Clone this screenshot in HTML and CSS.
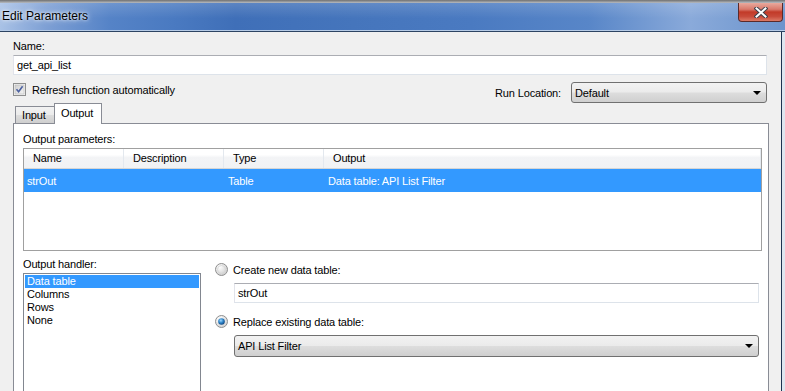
FILE: index.html
```html
<!DOCTYPE html>
<html>
<head>
<meta charset="utf-8">
<link rel="stylesheet" href="styles.css">
</head>
<body>
<div class="window">
  <div class="topstrip"></div>
  <div class="titlebar">
    <div class="title">Edit Parameters</div>
    <div class="close">
      <svg width="14" height="11" viewBox="0 0 14 11">
        <path d="M2.5 1.5 L11.5 9.5 M11.5 1.5 L2.5 9.5" stroke="#3a3f4a" stroke-width="4" stroke-linecap="square"/>
        <path d="M2.5 1.5 L11.5 9.5 M11.5 1.5 L2.5 9.5" stroke="#ffffff" stroke-width="2" stroke-linecap="square"/>
      </svg>
    </div>
  </div>
  <div class="main">
    <div class="client">
      <div class="top">
        <div class="label">Name:</div>
        <div class="textbox name-box">get_api_list</div>
        <div class="optrow">
          <div class="check">
            <svg class="checkbox" width="13" height="13" viewBox="0 0 13 13">
              <defs>
                <linearGradient id="cb" x1="0" y1="0" x2="1" y2="1">
                  <stop offset="0" stop-color="#cfcfcf"/>
                  <stop offset="1" stop-color="#f4f4f4"/>
                </linearGradient>
              </defs>
              <rect x="0.5" y="0.5" width="12" height="12" fill="#f4f4f4" stroke="#8e8f8f"/>
              <rect x="2" y="2" width="9" height="9" fill="url(#cb)" stroke="#b8b8b8" stroke-width="0.6"/>
              <path d="M3.5 6.3 L5.6 8.8 L9.6 3.2" fill="none" stroke="#4c61a0" stroke-width="1.6"/>
            </svg>
            <span>Refresh function automatically</span>
          </div>
          <div class="runloc">
            <span class="runlabel">Run Location:</span>
            <div class="combo run-combo"><span>Default</span><i class="arrow"></i></div>
          </div>
        </div>
      </div>
      <div class="tabs">
        <div class="tab">Input</div>
        <div class="tab active">Output</div>
      </div>
      <div class="panel">
        <div class="label">Output parameters:</div>
        <div class="listview">
          <div class="lv-header">
            <div class="hcol c1">Name</div>
            <div class="hcol c2">Description</div>
            <div class="hcol c3">Type</div>
            <div class="hcol c4">Output</div>
          </div>
          <div class="lv-row selected">
            <div class="rcol c1">strOut</div>
            <div class="rcol c2"></div>
            <div class="rcol c3">Table</div>
            <div class="rcol c4">Data table: API List Filter</div>
          </div>
        </div>
        <div class="handler">
          <div class="hleft">
            <div class="label">Output handler:</div>
            <div class="listbox">
              <div class="item selected">Data table</div>
              <div class="item">Columns</div>
              <div class="item">Rows</div>
              <div class="item">None</div>
            </div>
          </div>
          <div class="hright">
            <div class="radio-row first">
              <svg width="13" height="13" viewBox="0 0 13 13">
                <defs>
                  <radialGradient id="r1" cx="0.35" cy="0.3" r="0.8">
                    <stop offset="0" stop-color="#ffffff"/>
                    <stop offset="1" stop-color="#c9c9c9"/>
                  </radialGradient>
                </defs>
                <circle cx="6.5" cy="6.5" r="6" fill="url(#r1)" stroke="#8f8f8f"/>
                <circle cx="6.5" cy="6.5" r="4" fill="none" stroke="#d4d4d4" stroke-width="0.8"/>
              </svg>
              <span>Create new data table:</span>
            </div>
            <div class="textbox data-box">strOut</div>
            <div class="radio-row second">
              <svg width="13" height="13" viewBox="0 0 13 13">
                <defs>
                  <radialGradient id="r2" cx="0.35" cy="0.3" r="0.8">
                    <stop offset="0" stop-color="#ffffff"/>
                    <stop offset="1" stop-color="#cfcfcf"/>
                  </radialGradient>
                  <radialGradient id="r2d" cx="0.4" cy="0.35" r="0.7">
                    <stop offset="0" stop-color="#9fd8ff"/>
                    <stop offset="0.5" stop-color="#2d84c8"/>
                    <stop offset="1" stop-color="#0e3f78"/>
                  </radialGradient>
                </defs>
                <circle cx="6.5" cy="6.5" r="6" fill="url(#r2)" stroke="#8f8f8f"/>
                <circle cx="6.5" cy="6.5" r="3.3" fill="url(#r2d)"/>
              </svg>
              <span>Replace existing data table:</span>
            </div>
            <div class="combo data-combo"><span>API List Filter</span><i class="arrow"></i></div>
          </div>
        </div>
      </div>
    </div>
    <div class="frame"></div>
  </div>
</div>
</body>
</html>
```
FILE: styles.css
```css
* { box-sizing: border-box; }
html, body { margin: 0; padding: 0; }
body {
  font-family: "Liberation Sans", Arial, sans-serif;
  font-size: 11px;
  letter-spacing: -0.15px;
  color: #000;
  background: #f0f0f0;
}
.window {
  width: 785px;
  height: 391px;
  overflow: hidden;
  display: flex;
  flex-direction: column;
}
.topstrip {
  height: 3px;
  background: linear-gradient(180deg, #6f7070, #b8bcc2);
  flex: none;
}
.titlebar {
  height: 29px;
  flex: none;
  display: flex;
  justify-content: space-between;
  align-items: flex-start;
  background:
    linear-gradient(180deg, rgba(255,255,255,0.15) 0%, rgba(255,255,255,0) 55%),
    linear-gradient(90deg, #a9c2e6 0%, #7d9fd4 6%, #5583c7 14%, #4a7ac1 22%, #3f6fb8 30%, #4575bc 45%, #4a7ac1 60%, #5886c8 75%, #8aaada 88%, #789dd2 95%, #6d94cd 100%);
  border-bottom: 1px solid #2d4463;
  box-shadow: inset 0 -1px 0 #b6cbe6;
}
.title {
  font-family: "Liberation Sans", Arial, sans-serif;
  font-size: 12px;
  letter-spacing: 0;
  line-height: 27px;
  padding-left: 2px;
  color: #000;
  text-shadow: 0 0 6px rgba(255,255,255,0.9), 0 0 3px rgba(255,255,255,0.9);
}
.close {
  width: 45px;
  height: 19px;
  margin-right: 2px;
  border: 1px solid #5b2a2a;
  border-top: none;
  border-radius: 0 0 4px 4px;
  background: linear-gradient(180deg, #e9a99d 0%, #d9796b 35%, #c23a28 50%, #c84b3a 75%, #dc7a66 100%);
  display: flex;
  align-items: center;
  justify-content: center;
}
.main {
  flex: 1;
  display: flex;
  min-height: 0;
}
.client {
  width: 781px;
  flex: none;
  background: #f0f0f0;
  padding: 8px 12px 0 13px;
  display: flex;
  flex-direction: column;
}
.frame {
  flex: 1;
  border-left: 1px solid #1f3350;
  background: #dfe6ef;
}
.top { padding-right: 2px; }
.label {
  line-height: 13px;
  height: 13px;
  white-space: nowrap;
}
.textbox {
  background: #fff;
  border: 1px solid #dde3ea;
  border-top-color: #abadb3;
  border-left-color: #e2e3ea;
  line-height: 18px;
  padding-left: 3px;
}
.name-box {
  margin-top: 2px;
  height: 20px;
}
.optrow {
  margin-top: 7px;
  display: flex;
  justify-content: space-between;
  align-items: flex-start;
  height: 21px;
}
.check {
  display: flex;
  align-items: center;
  margin-top: 1px;
  height: 13px;
}
.check span { margin-left: 6px; }
.checkbox { display: block; }
.runloc {
  display: flex;
  align-items: center;
}
.runlabel { margin-right: 10px; margin-top: 1px; }
.combo {
  position: relative;
  border: 1px solid #707070;
  border-radius: 3px;
  background: linear-gradient(180deg, #f2f2f2 0%, #ebebeb 48%, #dddddd 52%, #cfcfcf 100%);
  display: flex;
  align-items: center;
  padding-left: 3px;
  height: 21px;
}
.run-combo { width: 196px; }
.arrow {
  position: absolute;
  right: 5px;
  top: 8px;
  width: 0;
  height: 0;
  border-left: 4px solid transparent;
  border-right: 4px solid transparent;
  border-top: 4px solid #000;
}
.tabs {
  display: flex;
  align-items: flex-end;
  height: 20px;
  padding-left: 2px;
  position: relative;
  z-index: 1;
}
.tab {
  height: 17px;
  padding: 0 6px 0 6px;
  line-height: 16px;
  border: 1px solid #898c95;
  border-bottom: none;
  background: linear-gradient(180deg, #f2f2f2 0%, #ebebeb 50%, #dddddd 51%, #cfcfcf 100%);
  width: 40px;
}
.tab.active {
  height: 21px;
  width: 48px;
  margin-bottom: -1px;
  background: #fff;
  line-height: 18px;
  padding-left: 6px;
  border-left: 1px solid #898c95;
  margin-left: -1px;
}
.panel {
  flex: 1;
  background: #fff;
  border: 1px solid #898c95;
  padding: 9px 6px 0 9px;
  display: flex;
  flex-direction: column;
}
.listview {
  margin-top: 2px;
  height: 103px;
  border: 1px solid #a0a0a0;
  background: #fff;
}
.lv-header {
  display: flex;
  height: 20px;
  background: linear-gradient(180deg, #ffffff 0%, #ffffff 30%, #f3f4f6 45%, #f1f2f4 100%);
  border-bottom: 1px solid #d5d5d5;
}
.hcol {
  line-height: 19px;
  padding-left: 9px;
  border-right: 1px solid #e3e8ee;
  white-space: nowrap;
}
.c1 { width: 100px; }
.c2 { width: 100px; }
.c3 { width: 100px; }
.c4 { flex: 1; }
.lv-header .c4 { border-right: 1px solid #e3e8ee; }
.lv-row {
  display: flex;
  height: 23px;
  align-items: center;
}
.lv-row.selected { background: #3399ff; color: #fff; }
.rcol { padding-left: 3px; white-space: nowrap; }
.rcol.c3, .rcol.c4 { padding-left: 4px; }
.handler {
  margin-top: 7px;
  display: flex;
  flex: 1;
  align-items: flex-start;
}
.hleft {
  width: 178px;
  display: flex;
  flex-direction: column;
}
.listbox {
  margin-top: 2px;
  height: 140px;
  border: 1px solid #828790;
  padding: 1px;
}
.item {
  height: 13px;
  line-height: 13px;
  padding-left: 2px;
}
.item.selected { background: #3399ff; color: #fff; }
.hright {
  flex: 1;
  margin-left: 14px;
  margin-right: 3px;
  display: flex;
  flex-direction: column;
}
.radio-row {
  display: flex;
  align-items: center;
  height: 13px;
}
.radio-row svg { display: block; flex: none; }
.radio-row span { margin-left: 5px; }
.radio-row.first { margin-top: 5px; }
.radio-row.second { margin-top: 12px; }
.data-box {
  margin-top: 7px;
  margin-left: 19px;
  height: 20px;
}
.data-combo {
  margin-top: 7px;
  margin-left: 19px;
  height: 22px;
}
```
